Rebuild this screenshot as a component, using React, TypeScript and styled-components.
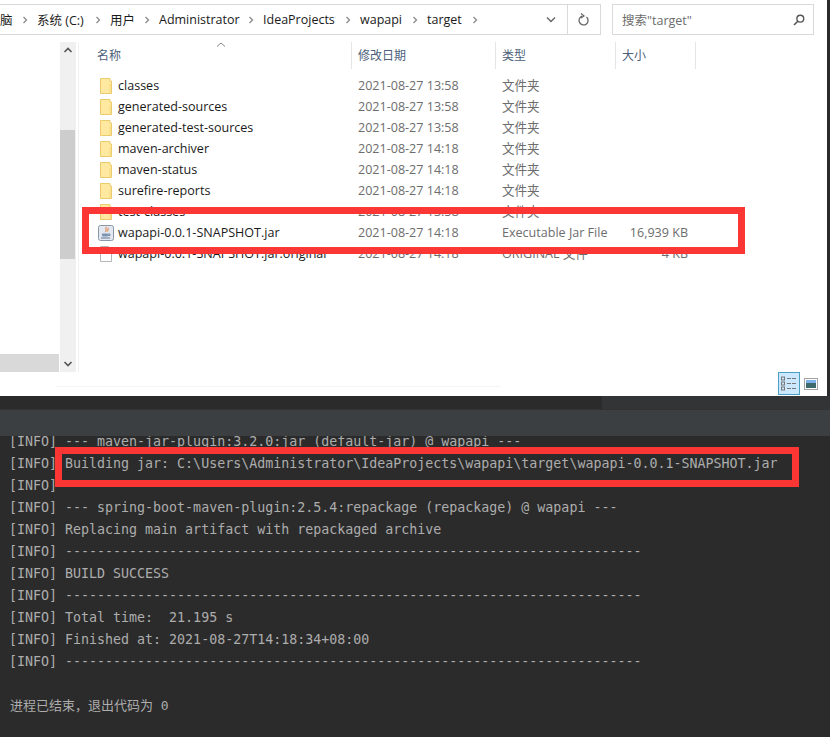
import { Fragment } from "react"
import styled, { createGlobalStyle } from "styled-components"

const GlobalStyle = createGlobalStyle`
html, body {
  margin: 0;
  padding: 0;
  background: #2b2b2b;
}
`

const Page = styled.div`
position: relative;
width: 830px;
height: 737px;
overflow: hidden;
background: #2b2b2b;
`
const Explorer = styled.div`
width: 827px;
height: 396px;
background: #fff;
font-family: 'Open Sans', 'Noto Sans CJK SC', sans-serif;
font-size: 12px;
display: flex;
flex-direction: column;
`
const TopBar = styled.div`
display: flex;
height: 31px;
margin-top: 4px;
`
const AddressBar = styled.div`
width: 601px;
box-sizing: border-box;
border: 1px solid #d9d9d9;
border-left: none;
display: flex;
align-items: center;
overflow: hidden;
`
const Crumbs = styled.div`
flex: 1;
display: flex;
align-items: center;
color: #1a1a1a;
font-size: 12.5px;
white-space: nowrap;
overflow: hidden;
`
const Crumb = styled.span<{ $w: number }>`
width: ${p => p.$w}px;
flex: none;
`
const Sep = styled.span`
width: 24px;
flex: none;
display: flex;
justify-content: center;
color: #7a7a7a;
`
const AddrButton = styled.div<{ $divider?: boolean }>`
width: 32px;
height: 100%;
display: flex;
align-items: center;
justify-content: center;
border-left: ${p => (p.$divider ? "1px solid #d9d9d9" : "none")};
color: #666;
`
const SearchBox = styled.div`
margin-left: 11px;
width: 202px;
box-sizing: border-box;
border: 1px solid #d9d9d9;
display: flex;
align-items: center;
justify-content: space-between;
padding: 0 8px 0 9px;
color: #6d6d6d;
font-size: 12.5px;
`
const Body = styled.div`
flex: none;
height: 344px;
display: flex;
margin-top: 7px;
`
const NavPane = styled.div`
width: 60px;
height: 330px;
display: flex;
flex-direction: column;
justify-content: flex-end;
`
const NavHScroll = styled.div`
height: 18px;
width: 59px;
background: #d9d9d9;
`
const VScroll = styled.div`
width: 16px;
height: 330px;
background: #f0f0f0;
display: flex;
flex-direction: column;
align-items: center;
justify-content: space-between;
padding: 4px 0;
box-sizing: border-box;
position: relative;
margin-right: 2px;
box-shadow: 2px 0 0 #fff, 3px 0 0 #f0f0f0;
`
const VThumb = styled.div`
position: absolute;
left: 0;
top: 88px;
width: 15px;
height: 129px;
background: #cdcdcd;
`
const Listing = styled.div`
flex: 1;
display: flex;
flex-direction: column;
min-width: 0;
`
const HeaderRow = styled.div`
display: flex;
height: 27px;
position: relative;
`
const HeaderCell = styled.div<{ $w: number; $first?: boolean }>`
width: ${p => p.$w}px;
box-sizing: border-box;
flex: none;
color: #4c607a;
padding-left: ${p => (p.$first ? 19 : 6)}px;
padding-top: 4px;
border-right: 1px solid #e5e5e5;
font-size: 12px;
`
const SortCaret = styled.svg`
position: absolute;
left: 138px;
top: 0;
`
const Rows = styled.div`
margin-top: 6px;
`
const Row = styled.div`
display: flex;
height: 21px;
line-height: 21px;
align-items: center;
white-space: nowrap;
font-size: 12.55px;
`
const NameCell = styled.div`
width: 280px;
flex: none;
display: flex;
align-items: center;
gap: 4px;
padding-left: 21px;
box-sizing: border-box;
color: #1a1a1a;
`
const DateCell = styled.div`
width: 144px;
flex: none;
color: #6d6d6d;
`
const TypeCell = styled.div`
width: 112px;
flex: none;
color: #6d6d6d;
`
const SizeCell = styled.div`
width: 74px;
flex: none;
text-align: right;
color: #6d6d6d;
`
const FooterLine = styled.div`
margin-left: 55px;
width: 445px;
height: 1px;
background: #f4f4f4;
`
const ViewSwitch = styled.div`
position: absolute;
left: 778px;
top: 372px;
display: flex;
align-items: center;
gap: 4px;
`
const ViewButton = styled.div<{ $active?: boolean }>`
box-sizing: border-box;
width: ${p => (p.$active ? 22 : 14)}px;
height: ${p => (p.$active ? 23 : 12)}px;
background: ${p => (p.$active ? "#cce8ff" : "transparent")};
border: ${p => (p.$active ? "1px solid #4a9fc4" : "none")};
display: flex;
align-items: center;
justify-content: center;
`
const IdeTabs = styled.div`
height: 13px;
display: flex;
`
const IdeTabLeft = styled.div`
width: 602px;
background: #2b2b2b;
`
const IdeTabRight = styled.div`
flex: 1;
background: #323436;
`
const IdeToolbar = styled.div`
height: 27px;
background: #3c3f41;
border-top: 1px solid #323232;
box-sizing: border-box;
`
const Console = styled.div`
height: 301px;
overflow: hidden;
background: #2b2b2b;
color: #adadad;
font-family: 'DejaVu Sans Mono', 'Noto Sans CJK SC', monospace;
font-size: 13.3px;
`
const ConsoleInner = styled.div`
margin-top: -5px;
padding-left: 9px;
`
const Line = styled.div`
height: 22px;
line-height: 22px;
white-space: pre;
`
const ExitLine = styled(Line)`
font-size: 13px;
padding-left: 1px;
`
const RedBox = styled.div<{ $l: number; $t: number; $w: number; $h: number }>`
position: absolute;
left: ${p => p.$l}px;
top: ${p => p.$t}px;
width: ${p => p.$w}px;
height: ${p => p.$h}px;
box-sizing: border-box;
border: 7px solid #fc3535;
`

const Chevron = () => (
  <svg width="8" height="10" viewBox="0 0 8 10">
    <path d="M2.5 2 L5.5 5 L2.5 8" fill="none" stroke="#8a8a8a" strokeWidth="1.3" />
  </svg>
)

const Folder = () => (
  <svg width="14" height="16" viewBox="0 0 14 16" style={{ flex: "none", marginRight: 1 }}>
    <path d="M1.5 0.5 H11 V3 H12.5 V15.5 H1.5 Z" fill="#ffe9a1" stroke="#eccb6c" />
    <path d="M11 6 V15" stroke="#f5d97f" />
  </svg>
)

const JarIcon = () => (
  <svg width="16" height="16" viewBox="0 0 16 16" style={{ flex: "none", marginLeft: -1 }}>
    <rect x="0.5" y="0.5" width="15" height="15" rx="2" fill="#e3e8f0" stroke="#8a97a8" />
    <path d="M8.5 2 C6.5 4 9.5 5 7.5 7 M10.5 3 C9.5 4 10.5 5 9.5 6.5" fill="none" stroke="#e08a50" strokeWidth="1.1" />
    <path d="M4 8.5 H10 V10.5 Q10 11.5 9 11.5 H5 Q4 11.5 4 10.5 Z" fill="#7d93b0" />
    <path d="M10 9 H12 V10.5 H10" fill="none" stroke="#6f88a8" />
    <path d="M3 13 H12" stroke="#5b7393" strokeWidth="1" />
  </svg>
)

const FileIcon = () => (
  <svg width="14" height="16" viewBox="0 0 14 16" style={{ flex: "none", marginRight: 1 }}>
    <path d="M1.5 0.5 H9.5 L12.5 3.5 V15.5 H1.5 Z" fill="#fff" stroke="#b5b5b5" />
    <path d="M9.5 0.5 V3.5 H12.5" fill="#f2f2f2" stroke="#b5b5b5" />
  </svg>
)

const crumbs: [string, number][] = [
  ["系统 (C:)", 49],
  ["用户", 25],
  ["Administrator", 80],
  ["IdeaProjects", 73],
  ["wapapi", 43],
  ["target", 36],
]

const files = [
  { name: "classes", date: "2021-08-27 13:58", type: "文件夹", size: "", kind: "folder" },
  { name: "generated-sources", date: "2021-08-27 13:58", type: "文件夹", size: "", kind: "folder" },
  { name: "generated-test-sources", date: "2021-08-27 13:58", type: "文件夹", size: "", kind: "folder" },
  { name: "maven-archiver", date: "2021-08-27 14:18", type: "文件夹", size: "", kind: "folder" },
  { name: "maven-status", date: "2021-08-27 14:18", type: "文件夹", size: "", kind: "folder" },
  { name: "surefire-reports", date: "2021-08-27 14:18", type: "文件夹", size: "", kind: "folder" },
  { name: "test-classes", date: "2021-08-27 13:58", type: "文件夹", size: "", kind: "folder" },
  { name: "wapapi-0.0.1-SNAPSHOT.jar", date: "2021-08-27 14:18", type: "Executable Jar File", size: "16,939 KB", kind: "jar" },
  { name: "wapapi-0.0.1-SNAPSHOT.jar.original", date: "2021-08-27 14:18", type: "ORIGINAL 文件", size: "4 KB", kind: "file" },
]

const dashes = "-".repeat(72)
const consoleLines = [
  "[INFO] --- maven-jar-plugin:3.2.0:jar (default-jar) @ wapapi ---",
  "[INFO] Building jar: C:\\Users\\Administrator\\IdeaProjects\\wapapi\\target\\wapapi-0.0.1-SNAPSHOT.jar",
  "[INFO]",
  "[INFO] --- spring-boot-maven-plugin:2.5.4:repackage (repackage) @ wapapi ---",
  "[INFO] Replacing main artifact with repackaged archive",
  "[INFO] " + dashes,
  "[INFO] BUILD SUCCESS",
  "[INFO] " + dashes,
  "[INFO] Total time:  21.195 s",
  "[INFO] Finished at: 2021-08-27T14:18:34+08:00",
  "[INFO] " + dashes,
  " ",
]

const App = () => {
  return (
    <Page>
      <GlobalStyle />
      <Explorer>
        <TopBar>
          <AddressBar>
            <Crumbs>
              <Crumb $w={13}>脑</Crumb>
              <Sep><Chevron /></Sep>
              {crumbs.map(([label, w]) => (
                <Fragment key={label}>
                  <Crumb $w={w}>{label}</Crumb>
                  <Sep><Chevron /></Sep>
                </Fragment>
              ))}
            </Crumbs>
            <AddrButton>
              <svg width="10" height="7" viewBox="0 0 10 7">
                <path d="M1 1.5 L5 5.5 L9 1.5" fill="none" stroke="#666" strokeWidth="1.4" />
              </svg>
            </AddrButton>
            <AddrButton $divider>
              <svg width="12" height="14" viewBox="0 0 12 14">
                <path d="M4 3.2 A4.5 4.5 0 1 0 8.5 4" fill="none" stroke="#666" strokeWidth="1.3" />
                <path d="M3 0.5 L6 3 L3 5" fill="none" stroke="#666" strokeWidth="1.2" />
              </svg>
            </AddrButton>
          </AddressBar>
          <SearchBox>
            <span>搜索"target"</span>
            <svg width="12" height="12" viewBox="0 0 12 12">
              <circle cx="7.3" cy="4.7" r="3.4" fill="none" stroke="#555" strokeWidth="1.4" />
              <path d="M4.8 7.2 L1 11" stroke="#555" strokeWidth="1.6" />
            </svg>
          </SearchBox>
        </TopBar>
        <Body>
          <NavPane>
            <NavHScroll />
          </NavPane>
          <VScroll>
            <svg width="10" height="8" viewBox="0 0 10 8">
              <path d="M1.5 6 L5 2.5 L8.5 6" fill="none" stroke="#555" strokeWidth="1.6" />
            </svg>
            <VThumb />
            <svg width="10" height="8" viewBox="0 0 10 8">
              <path d="M1.5 2 L5 5.5 L8.5 2" fill="none" stroke="#555" strokeWidth="1.6" />
            </svg>
          </VScroll>
          <Listing>
            <HeaderRow>
              <HeaderCell $w={274} $first>名称</HeaderCell>
              <HeaderCell $w={144}>修改日期</HeaderCell>
              <HeaderCell $w={120}>类型</HeaderCell>
              <HeaderCell $w={80}>大小</HeaderCell>
              <SortCaret width="10" height="6" viewBox="0 0 10 6">
                <path d="M1 4.5 L5 1 L9 4.5" fill="none" stroke="#8a8a8a" />
              </SortCaret>
            </HeaderRow>
            <Rows>
              {files.map(f => (
                <Row key={f.name}>
                  <NameCell>
                    {f.kind === "folder" && <Folder />}
                    {f.kind === "jar" && <JarIcon />}
                    {f.kind === "file" && <FileIcon />}
                    {f.name}
                  </NameCell>
                  <DateCell>{f.date}</DateCell>
                  <TypeCell>{f.type}</TypeCell>
                  <SizeCell>{f.size}</SizeCell>
                </Row>
              ))}
            </Rows>
          </Listing>
        </Body>
        <FooterLine />
      </Explorer>
      <ViewSwitch>
        <ViewButton $active>
          <svg width="16" height="15" viewBox="0 0 16 15">
            <g fill="none" stroke="#777">
              <rect x="0.5" y="1" width="3" height="3" />
              <rect x="0.5" y="6" width="3" height="3" />
              <rect x="0.5" y="11" width="3" height="3" />
            </g>
            <path d="M6 2.5 H10 M11 2.5 H15 M6 7.5 H10 M11 7.5 H15 M6 12.5 H10 M11 12.5 H15" stroke="#777" />
          </svg>
        </ViewButton>
        <ViewButton>
          <svg width="14" height="12" viewBox="0 0 14 12">
            <rect x="0.5" y="0.5" width="13" height="11" fill="#fff" stroke="#a3a3a3" />
            <rect x="2" y="2" width="10" height="3" fill="#7fb2ea" />
            <rect x="2" y="5" width="10" height="5" fill="#3f6a6c" />
          </svg>
        </ViewButton>
      </ViewSwitch>
      <IdeTabs>
        <IdeTabLeft />
        <IdeTabRight />
      </IdeTabs>
      <IdeToolbar />
      <Console>
        <ConsoleInner>
          {consoleLines.map((l, i) => (
            <Line key={i}>{l}</Line>
          ))}
          <ExitLine>进程已结束，退出代码为 0</ExitLine>
        </ConsoleInner>
      </Console>
      <RedBox $l={82} $t={207} $w={663} $h={47} />
      <RedBox $l={55} $t={447} $w={744} $h={40} />
    </Page>
  )
}

export default App
